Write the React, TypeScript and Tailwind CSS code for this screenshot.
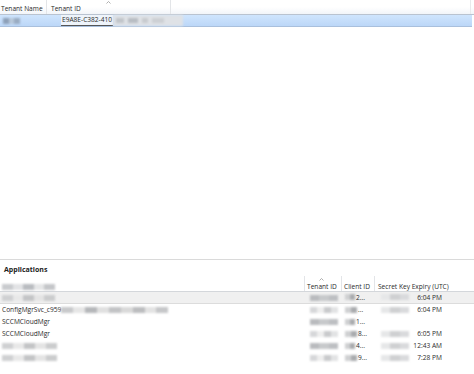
import React from "react";

// blurred redaction, built from a few grey blocks
function Smudge({ w, tones }: { w: number; tones: string[] }) {
  return (
    <div className="flex h-[6px] blur-[0.8px]" style={{ width: w }}>
      {tones.map((t, i) => (
        <div key={i} className="flex-1 h-full" style={{ backgroundColor: t }} />
      ))}
    </div>
  );
}

function SortUp({ className }: { className: string }) {
  return (
    <svg className={className} width="5" height="3" viewBox="0 0 5 3">
      <path d="M0.5 2.5 L2.5 0.5 L4.5 2.5" fill="none" stroke="#9a9a9a" strokeWidth="0.8" />
    </svg>
  );
}

const rows = [
  { name: null, client: "2...", time: "6:04 PM", sel: true },
  { name: "ConfigMgrSvc_c959", client: "...", time: "6:04 PM", sel: false },
  { name: "SCCMCloudMgr", client: "1...", time: "", sel: false },
  { name: "SCCMCloudMgr", client: "8...", time: "6:05 PM", sel: false },
  { name: null, client: "4...", time: "12:43 AM", sel: false },
  { name: null, client: "9...", time: "7:28 PM", sel: false },
];

export default function App() {
  return (
    <div className="w-[474px] h-[374px] bg-white flex flex-col overflow-hidden text-[6.6px] text-[#2a2a2a] font-['Open_Sans',sans-serif]">
      {/* Tenants grid */}
      <div className="h-[260px] flex flex-col border-b border-[#dadada]">
        <div className="relative h-[15px] flex bg-gradient-to-b from-white from-50% to-[#f2f5f9] border-b border-[#b9c3d0]">
          <div className="w-[47px] pl-[1px] pt-[4px] border-r border-[#e3e5e8] whitespace-nowrap overflow-hidden">Tenant Name</div>
          <div className="w-[124px] pl-[4px] pt-[4px] border-r border-[#e3e5e8]">Tenant ID</div>
          <div className="flex-1 mr-[3px] border-r border-[#e8eaec]" />
          <SortUp className="absolute left-[106px] top-[1px]" />
        </div>
        <div className="h-[12px] mr-[2px] flex items-center bg-gradient-to-b from-[#cfe5fd] to-[#bcd7f8] border-b border-[#a9c0dd]">
          <div className="w-[47px] pl-[3px] flex items-center">
            <Smudge w={17} tones={["#8da0b8", "#b8c8da", "#9aacc2"]} />
          </div>
          <div className="flex items-center pl-[14px]">
            <div className="h-[11px] px-[1px] bg-[#eef4fb] border-b border-[#555] flex items-center whitespace-nowrap">E9A8E-C382-410</div>
            <div className="h-[11px] w-[70px] bg-[#dfe2e6] blur-[1px] flex items-center gap-[4px] px-[3px]">
              <div className="w-[8px] h-[5px] bg-[#c1c5ca]" />
              <div className="w-[10px] h-[5px] bg-[#b8bdc3]" />
              <div className="w-[6px] h-[5px] bg-[#c8cbcf]" />
              <div className="w-[12px] h-[5px] bg-[#cdd0d4]" />
            </div>
          </div>
        </div>
        <div className="flex-1" />
      </div>

      {/* Applications grid */}
      <div className="pl-[4px] pt-[5px] h-[16px] font-bold text-[7px] text-[#222]">Applications</div>
      <div className="relative h-[16px] flex border-b border-[#d4d7db]">
        <div className="w-[305px] border-r border-[#e3e5e8] flex items-end pb-[1px] pl-[2px]">
          <Smudge w={53} tones={["#c9cbce", "#e2e3e5", "#b9bcc0", "#e5e6e7", "#c4c6c9"]} />
        </div>
        <div className="w-[37px] border-r border-[#e3e5e8] pl-[2px] pt-[6px]">Tenant ID</div>
        <div className="w-[33px] border-r border-[#e3e5e8] pl-[2px] pt-[6px]">Client ID</div>
        <div className="flex-1 pl-[3px] pt-[6px] whitespace-nowrap">Secret Key Expiry (UTC)</div>
        <SortUp className="absolute left-[319px] top-[2px]" />
      </div>
      {rows.map((r, i) => (
        <div
          key={i}
          className={`h-[12px] flex items-center ${r.sel ? "bg-[#f0f0f0] border-b border-[#dcdcdc]" : ""}`}
        >
          <div className="w-[305px] pl-[2px] flex items-center whitespace-nowrap">
            {r.name ? (
              <>
                <span>{r.name}</span>
                {i === 1 && <Smudge w={107} tones={["#c8c9cb", "#e6e6e6", "#b5b7ba", "#e0e0e0", "#c2c3c5", "#d9d9d9", "#bcbdbf", "#e3e3e3", "#c6c7c9"]} />}
              </>
            ) : (
              <Smudge w={i === 0 ? 53 : 55} tones={["#cfd0d2", "#e8e8e8", "#c3c4c6", "#e4e4e4", "#cbcccd"]} />
            )}
          </div>
          <div className="w-[37px] pl-[5px] flex items-center">
            <Smudge w={28} tones={i % 2 === 0 ? ["#b9bbbe", "#c7c9cb", "#bdbfc2"] : ["#d6d7d9", "#eeeeee", "#c9cacc", "#e2e3e4"]} />
          </div>
          <div className="w-[33px] pl-[3px] flex items-center whitespace-nowrap">
            <Smudge w={i % 2 === 0 ? 10 : 12} tones={["#cfd0d2", "#a9abae"]} />
            <span className="ml-[1px]">{r.client}</span>
          </div>
          <div className="flex-1 flex items-center pl-[6px]">
            {r.time ? (
              <>
                <Smudge w={28} tones={["#e6e7e8", "#cfd0d2", "#d9dadc"]} />
                <span className="w-[33px] text-right whitespace-nowrap">{r.time}</span>
              </>
            ) : null}
          </div>
        </div>
      ))}
    </div>
  );
}
